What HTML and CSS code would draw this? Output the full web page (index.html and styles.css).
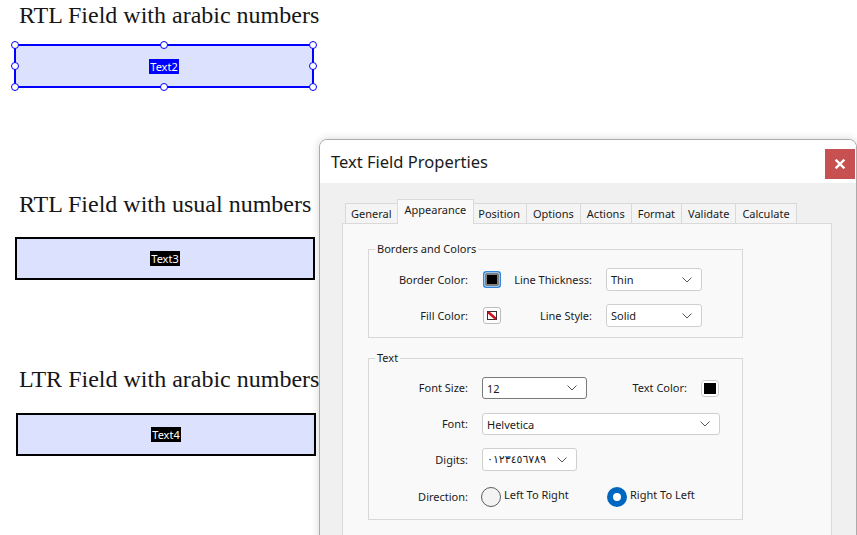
FILE: index.html
```html
<!DOCTYPE html>
<html>
<head>
<meta charset="utf-8">
<title>Text Field Properties</title>
<link rel="stylesheet" href="styles.css">
</head>
<body>
<div class="doc">
  <div class="item item-1">
    <h2 class="cap">RTL Field with arabic numbers</h2>
    <div class="field field-sel">
      <span class="fname fname-sel">Text2</span>
      <i class="hd hd-tl"></i><i class="hd hd-tc"></i><i class="hd hd-tr"></i>
      <i class="hd hd-ml"></i><i class="hd hd-mr"></i>
      <i class="hd hd-bl"></i><i class="hd hd-bc"></i><i class="hd hd-br"></i>
    </div>
  </div>
  <div class="item item-2">
    <h2 class="cap">RTL Field with usual numbers</h2>
    <div class="field"><span class="fname">Text3</span></div>
  </div>
  <div class="item item-3">
    <h2 class="cap">LTR Field with arabic numbers</h2>
    <div class="field"><span class="fname">Text4</span></div>
  </div>
</div>

<div class="dialog">
  <div class="titlebar">
    <span class="title">Text Field Properties</span>
    <span class="close"><svg width="10" height="10" viewBox="0 0 10 10"><path d="M1.5 1.5 L8.5 8.5 M8.5 1.5 L1.5 8.5" stroke="#fff" stroke-width="2.4" stroke-linecap="square"/></svg></span>
  </div>
  <div class="dbody">
    <div class="tabs">
      <div class="tab">General</div>
      <div class="tab tab-active">Appearance</div>
      <div class="tab">Position</div>
      <div class="tab">Options</div>
      <div class="tab">Actions</div>
      <div class="tab">Format</div>
      <div class="tab">Validate</div>
      <div class="tab">Calculate</div>
    </div>
    <div class="panel">
      <fieldset class="group group-bc">
        <legend>Borders and Colors</legend>
        <div class="bc-grid">
          <span class="lbl">Border Color:</span>
          <span class="swatch">
            <svg width="18" height="17" viewBox="0 0 18 17"><rect x="0.75" y="0.75" width="16.5" height="15.5" rx="2.5" fill="#fff" stroke="#2f86dc" stroke-width="1.5"/><rect x="2.5" y="2.5" width="13" height="12" fill="#000"/><rect x="3.5" y="3.5" width="11" height="10" fill="none" stroke="#fff" stroke-dasharray="1 1"/></svg>
          </span>
          <span class="lbl">Line Thickness:</span>
          <div class="select w-96"><span>Thin</span><svg class="chev" width="10" height="6" viewBox="0 0 10 6"><path d="M0.5 0.5 L5 5 L9.5 0.5" fill="none" stroke="#555" stroke-width="1"/></svg></div>
          <span class="lbl">Fill Color:</span>
          <span class="swatch">
            <svg width="18" height="17" viewBox="0 0 18 17"><rect x="0.5" y="0.5" width="17" height="16" rx="2.5" fill="#fcfcfc" stroke="#bdbdbd"/><rect x="4.5" y="4.5" width="9" height="8" fill="#fff" stroke="#333"/><path d="M5 5 L13 12" stroke="#d0101e" stroke-width="2.6"/></svg>
          </span>
          <span class="lbl">Line Style:</span>
          <div class="select w-96"><span>Solid</span><svg class="chev" width="10" height="6" viewBox="0 0 10 6"><path d="M0.5 0.5 L5 5 L9.5 0.5" fill="none" stroke="#555" stroke-width="1"/></svg></div>
        </div>
      </fieldset>

      <fieldset class="group group-text">
        <legend>Text</legend>
        <div class="row row-1">
          <span class="lbl lbl-main">Font Size:</span>
          <div class="select select-dark w-105"><span>12</span><svg class="chev" width="10" height="6" viewBox="0 0 10 6"><path d="M0.5 0.5 L5 5 L9.5 0.5" fill="none" stroke="#555" stroke-width="1"/></svg></div>
          <span class="lbl lbl-tc">Text Color:</span>
          <span class="swatch swatch-tc">
            <svg width="18" height="17" viewBox="0 0 18 17"><rect x="0.5" y="0.5" width="17" height="16" rx="3" fill="#fff" stroke="#c9c9c9"/><rect x="3" y="3" width="12" height="11" fill="#000"/></svg>
          </span>
        </div>
        <div class="row row-2">
          <span class="lbl lbl-main">Font:</span>
          <div class="select w-238"><span>Helvetica</span><svg class="chev" width="10" height="6" viewBox="0 0 10 6"><path d="M0.5 0.5 L5 5 L9.5 0.5" fill="none" stroke="#555" stroke-width="1"/></svg></div>
        </div>
        <div class="row row-3">
          <span class="lbl lbl-main">Digits:</span>
          <div class="select w-95"><span class="digits">٠١٢٣٤٥٦٧٨٩</span><svg class="chev" width="10" height="6" viewBox="0 0 10 6"><path d="M0.5 0.5 L5 5 L9.5 0.5" fill="none" stroke="#555" stroke-width="1"/></svg></div>
        </div>
        <div class="row row-4">
          <span class="lbl lbl-main">Direction:</span>
          <span class="opt opt-first"><span class="radio"></span><span class="opt-text">Left To Right</span></span>
          <span class="opt"><span class="radio radio-on"></span><span class="opt-text">Right To Left</span></span>
        </div>
      </fieldset>
    </div>
  </div>
</div>
</body>
</html>
```

FILE: styles.css
```css
* { box-sizing: border-box; }

html, body {
  margin: 0;
  padding: 0;
}

body {
  width: 857px;
  height: 535px;
  overflow: hidden;
  position: relative;
  background: #ffffff;
  font-family: "Noto Sans", "DejaVu Sans", sans-serif;
  color: #1b1b1b;
}

/* ---------- document side ---------- */
.doc {
  padding-top: 1px;
}

.cap {
  margin: 0;
  padding-left: 19px;
  font-family: "Liberation Serif", "Times New Roman", serif;
  font-weight: 400;
  font-size: 24px;
  line-height: 28px;
  color: #161616;
  white-space: nowrap;
}

.field {
  width: 300px;
  height: 43px;
  border: 2px solid #000;
  background: #dce2fd;
  display: flex;
  align-items: center;
  justify-content: center;
  position: relative;
}

.item-1 .field { margin: 15px 0 0 14px; height: 44px; }
.item-2 { margin-top: 102px; }
.item-2 .field { margin: 19px 0 0 15px; }
.item-3 { margin-top: 85px; }
.item-3 .field { margin: 20px 0 0 16px; }

.field-sel { border-color: #0000ff; }

.fname {
  font-size: 11px;
  line-height: 15px;
  padding: 0 1px;
  color: #fff;
  background: #000;
}

.fname-sel { background: #0000ff; }

.hd {
  position: absolute;
  width: 8px;
  height: 8px;
  border: 1.5px solid #0000ff;
  border-radius: 50%;
  background: #fff;
}
.hd-tl { top: -5px; left: -5px; }
.hd-tc { top: -5px; left: 50%; margin-left: -4px; }
.hd-tr { top: -5px; right: -5px; }
.hd-ml { top: 50%; margin-top: -4px; left: -5px; }
.hd-mr { top: 50%; margin-top: -4px; right: -5px; }
.hd-bl { bottom: -5px; left: -5px; }
.hd-bc { bottom: -5px; left: 50%; margin-left: -4px; }
.hd-br { bottom: -5px; right: -5px; }

/* ---------- dialog ---------- */
.dialog {
  position: absolute;
  left: 319px;
  top: 139px;
  width: 538px;
  height: 420px;
  background: #f0f0f0;
  border: 1px solid #ababab;
  border-radius: 8px 8px 0 0;
  box-shadow: 0 0 9px rgba(0, 0, 0, 0.16);
  overflow: hidden;
}

.titlebar {
  height: 43px;
  background: #fff;
  display: flex;
  align-items: center;
  justify-content: space-between;
  padding-left: 11px;
}

.title {
  font-size: 16.5px;
  color: #1a1a1a;
  margin-top: -1px;
}

.close {
  align-self: flex-start;
  margin-top: 9px;
  margin-right: 1px;
  width: 30px;
  height: 30px;
  background: #c75050;
  display: flex;
  align-items: center;
  justify-content: center;
}

.dbody {
  padding: 20px 0 0 22px;
}

.tabs {
  display: flex;
  align-items: flex-end;
  padding-left: 3px;
  height: 20px;
  position: relative;
  z-index: 1;
}

.tab {
  height: 20px;
  border: 1px solid #d9d9d9;
  border-bottom: none;
  margin-left: -1px;
  background: #f4f4f4;
  font-size: 11px;
  line-height: 19px;
  padding: 0 6px;
  color: #1b1b1b;
  white-space: nowrap;
}

.tab:first-child { margin-left: 0; padding: 0 5px; }

.tab-active {
  margin: 0 -2px -1px -1px;
  padding: 0 7px;
  line-height: 20px;
  background: #f9f9f9;
  border-color: #dadada;
  position: relative;
  z-index: 2;
  height: 25px;
}

.panel {
  width: 490px;
  height: 330px;
  background: #f9f9f9;
  border: 1px solid #dadada;
  padding: 17px 0 0 25px;
}

.group {
  width: 375px;
  margin: 0;
  padding: 11px 0 10px 0;
  border: 1px solid #d8d8d8;
  min-width: 0;
}

.group legend {
  margin-left: 6px;
  padding: 0 2px;
  font-size: 11px;
  line-height: 16px;
  color: #1b1b1b;
}

.group-text {
  margin-top: 12px;
  padding-bottom: 12px;
}

.lbl {
  font-size: 11px;
  line-height: 16px;
  text-align: right;
  white-space: nowrap;
  color: #1b1b1b;
}

.bc-grid {
  display: grid;
  grid-template-columns: 99px 18px 78px 96px;
  grid-auto-rows: 23px;
  column-gap: 14px;
  row-gap: 13px;
  align-items: center;
}

.bc-grid > .swatch { margin-left: 1px; }

.swatch {
  display: flex;
  width: 18px;
  height: 17px;
}

.select {
  height: 23px;
  display: flex;
  align-items: center;
  justify-content: space-between;
  background: #fff;
  border: 1px solid #cfcfcf;
  border-radius: 3px;
  padding: 0 9px 0 4px;
  font-size: 11px;
  color: #1b1b1b;
}

.select-dark { border-color: #7a7a7a; }

.w-96 { width: 96px; }
.w-105 { width: 105px; }
.w-238 { width: 238px; }
.w-95 { width: 95px; }

.chev { display: block; flex: none; }

.digits {
  font-family: "DejaVu Sans", sans-serif;
  font-size: 11px;
}

.row {
  display: flex;
  align-items: center;
}

.row-1 { height: 22px; }
.row-1 .select { height: 22px; }
.row-2 { height: 22px; margin-top: 14px; }
.row-2 .select { height: 22px; }
.row-3 { height: 23px; margin-top: 13px; }
.row-4 { height: 20px; margin-top: 16px; }

.lbl-main {
  width: 99px;
  margin-right: 14px;
}

.lbl-tc {
  width: 100px;
}

.swatch-tc { margin-left: 14px; }

.opt {
  display: flex;
  align-items: flex-start;
  height: 20px;
}

.opt-first {
  width: 126px;
  margin-left: -1px;
}

.radio {
  width: 20px;
  height: 20px;
  flex: none;
  border-radius: 50%;
  border: 1px solid #5c5c5c;
  background: #f3f3f3;
}

.radio-on {
  border: 6px solid #0067c0;
  background: #fff;
}

.opt-text {
  font-size: 11px;
  line-height: 15px;
  margin-left: 3px;
  color: #1b1b1b;
}
```
